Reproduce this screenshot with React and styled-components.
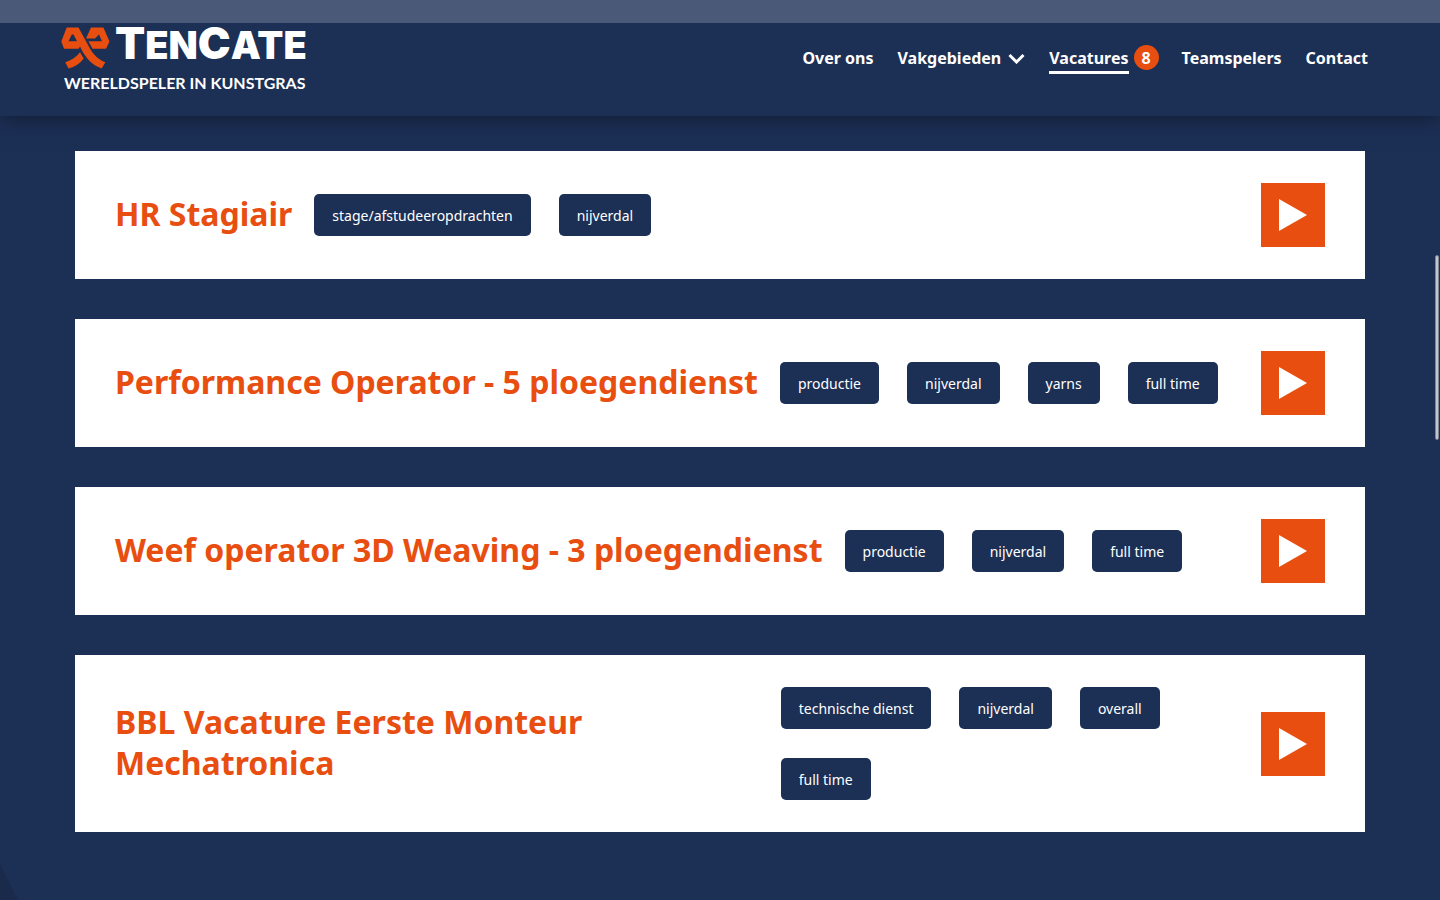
import React from "react"
import styled, { createGlobalStyle } from "styled-components"

const navy = "#1c2f55"
const orange = "#e84e10"

const GlobalStyle = createGlobalStyle`
  * {
    box-sizing: border-box;
  }
  body {
    margin: 0;
    background: ${navy};
    font-family: "Noto Sans", sans-serif;
    color: #fff;
  }
`

const Page = styled.div`
  position: relative;
  min-height: 100vh;
  overflow: hidden;
`

/* relative, so the header shadow stays underneath */
const TopStrip = styled.div`
  position: relative;
  height: 23px;
  background: #4a5977;
`

const Header = styled.header`
  display: flex;
  justify-content: space-between;
  align-items: flex-start;
  height: 93px;
  padding: 0 72px 0 60px;
  background: ${navy};
  box-shadow: 0 0 24px rgba(0, 0, 0, 0.5);
`

const LogoLink = styled.a`
  display: block;
  line-height: 0;

  svg {
    overflow: visible;
  }
`

const Nav = styled.nav`
  display: flex;
  align-items: center;
  gap: 24px;
  height: 70px;
`

const NavItem = styled.div`
  display: flex;
  align-items: center;
  gap: 5px;
  margin-right: -1px;
`

const NavLink = styled.a`
  display: flex;
  align-items: center;
  gap: 7px;
  padding: 3px 0 0;
  border-bottom: 3px solid ${props => (props.$active ? "#fff" : "transparent")};
  color: #fff;
  font-size: 16px;
  font-weight: 700;
  line-height: 26px;
  text-decoration: none;
`

const Badge = styled.span`
  width: 25px;
  height: 25px;
  margin-bottom: 2px;
  border-radius: 50%;
  background: ${orange};
  font-size: 16px;
  font-weight: 700;
  line-height: 26px;
  text-align: center;
`

const List = styled.main`
  display: flex;
  flex-direction: column;
  gap: 40px;
  padding: 35px 75px 40px;
`

const Card = styled.article`
  display: flex;
  align-items: center;
  padding: 32px 40px;
  background: #fff;
`

const Title = styled.h2`
  margin: 0 22px 0 0;
  padding-bottom: 3px;
  color: ${orange};
  font-size: 32px;
  font-weight: 700;
  line-height: 41px;
`

const Tags = styled.ul`
  display: flex;
  flex-wrap: wrap;
  gap: 29px 28px;
  margin: 0;
  padding: 0 20px 0 0;
  list-style: none;
`

const Tag = styled.li`
  padding: 1px 18px 0;
  border-radius: 5px;
  background: ${navy};
  font-size: 14px;
  line-height: 41px;
  white-space: nowrap;
`

const OpenButton = styled.button`
  display: flex;
  flex: none;
  justify-content: center;
  align-items: center;
  width: 64px;
  height: 64px;
  margin-left: auto;
  padding: 0;
  border: 0;
  background: ${orange};
  cursor: pointer;
`

const Corner = styled.div`
  position: absolute;
  left: 0;
  bottom: 0;
  width: 18px;
  height: 36px;
  background: #1a2a4b;
  clip-path: polygon(0 0, 100% 100%, 0 100%);
`

const ScrollThumb = styled.div`
  position: fixed;
  top: 255px;
  right: 1px;
  width: 4px;
  height: 185px;
  border: 1px solid #7d8493;
  border-radius: 2px;
  background: #c4c6cb;
`

const vacancies = [
  { title: "HR Stagiair", tags: ["stage/afstudeeropdrachten", "nijverdal"] },
  {
    title: "Performance Operator - 5 ploegendienst",
    tags: ["productie", "nijverdal", "yarns", "full time"],
  },
  {
    title: "Weef operator 3D Weaving - 3 ploegendienst",
    tags: ["productie", "nijverdal", "full time"],
  },
  {
    title: "BBL Vacature Eerste Monteur Mechatronica",
    tags: ["technische dienst", "nijverdal", "overall", "full time"],
  },
]

const Logo = () => (
  <svg width="252" height="72" viewBox="0 0 252 72" role="img" aria-label="TenCate">
    <g fill={orange}>
      <path
        fillRule="evenodd"
        d="M6.700 4.500H18.500L27.500 21C32 30 37 36 45.300 39.300L41.700 45.500C32 42 27 36 22.500 28.500L20 23.500L18.500 25.700H4L1.300 18.500ZM8.500 18.300H17L13.500 11.500H11.800Z"
      />
      <path d="M31 4.500H43.400L49.500 18.500L46 25.700H32.500L28.500 18.300H42L39 11.500L35 15.500H26Z" />
      <path d="M20 29.300L23.700 35.500C20 40.500 15 44 8.500 45.500L5.200 39.300C11.500 37.500 16.500 34 20 29.300Z" />
    </g>
    <g fill="#fff">
      <text x="55" y="36" fontFamily="Inter, sans-serif" fontWeight="900" fontSize="44">
        T<tspan fontSize="38">EN</tspan>C<tspan fontSize="38">ATE</tspan>
      </text>
      <text x="4" y="66" fontFamily="Lato, sans-serif" fontWeight="700" fontSize="16">
        WERELDSPELER IN KUNSTGRAS
      </text>
    </g>
  </svg>
)

const Chevron = () => (
  <svg width="17" height="12" viewBox="0 0 17 12" fill="none" stroke="#fff" strokeWidth="3">
    <path d="M1.500 3L8.500 10L15.500 3" />
  </svg>
)

const App = () => {
  return (
    <>
      <GlobalStyle />
      <Page>
        <TopStrip />
        <Header>
          <LogoLink href="#home">
            <Logo />
          </LogoLink>
          <Nav>
            <NavLink href="#over-ons">Over ons</NavLink>
            <NavLink href="#vakgebieden">
              Vakgebieden
              <Chevron />
            </NavLink>
            <NavItem>
              <NavLink href="#vacatures" $active>
                Vacatures
              </NavLink>
              <Badge>8</Badge>
            </NavItem>
            <NavLink href="#teamspelers">Teamspelers</NavLink>
            <NavLink href="#contact">Contact</NavLink>
          </Nav>
        </Header>
        <List>
          {vacancies.map(item => (
            <Card key={item.title}>
              <Title>{item.title}</Title>
              <Tags>
                {item.tags.map(tag => (
                  <Tag key={tag}>{tag}</Tag>
                ))}
              </Tags>
              <OpenButton aria-label={`Bekijk ${item.title}`}>
                <svg width="28" height="32" viewBox="0 0 28 32" fill="#fff">
                  <path d="M0 0L28 16L0 32Z" />
                </svg>
              </OpenButton>
            </Card>
          ))}
        </List>
        <Corner />
        <ScrollThumb />
      </Page>
    </>
  )
}

export default App
